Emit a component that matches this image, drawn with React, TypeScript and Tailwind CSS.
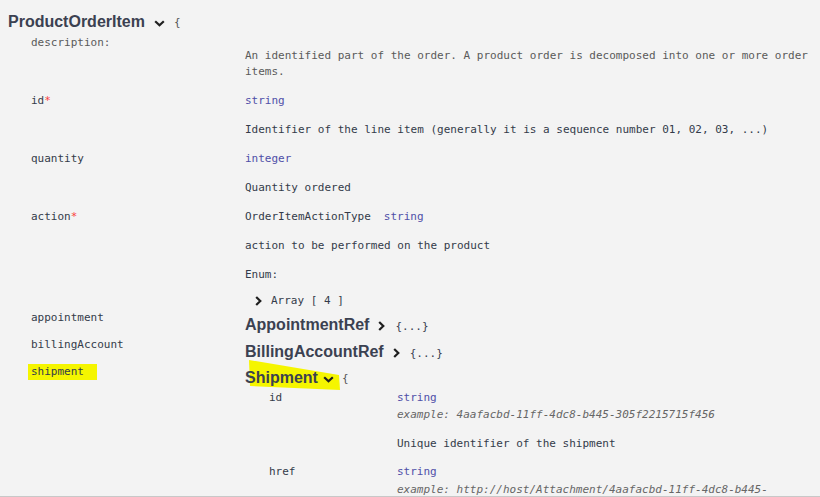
import React from "react";

const mono = "font-['Consolas','DejaVu_Sans_Mono',monospace] text-[11px] leading-[16px]";
const title = "font-['Liberation_Sans',Arial,sans-serif] text-[16px] font-bold leading-[20px] text-[#3b4151]";

function ChevronDown({ className = "" }: { className?: string }) {
  return (
    <svg width="11" height="7" viewBox="0 0 11 7" className={className} aria-hidden>
      <polyline points="1.2,1.2 5.5,5.3 9.8,1.2" fill="none" stroke="#1f1f1f" strokeWidth="2.2" />
    </svg>
  );
}

function ChevronRight({ className = "" }: { className?: string }) {
  return (
    <svg width="7" height="10" viewBox="0 0 7 10" className={className} aria-hidden>
      <polyline points="1.2,1 5.3,5 1.2,9" fill="none" stroke="#1f1f1f" strokeWidth="2.2" />
    </svg>
  );
}

function Req() {
  return <span className="text-[#f93e3e]">*</span>;
}

function Row({
  name,
  children,
  className = "",
  rightClass = "",
  nameClass = "",
}: {
  name: React.ReactNode;
  children: React.ReactNode;
  className?: string;
  rightClass?: string;
  nameClass?: string;
}) {
  return (
    <div className={`flex ${className}`}>
      <div className={`w-[245px] shrink-0 pl-[31px] ${mono} text-[#333b4a] ${nameClass}`}>{name}</div>
      <div className={`flex-1 ${rightClass}`}>{children}</div>
    </div>
  );
}

function RefTitle({ label }: { label: string }) {
  return (
    <div className="flex items-center">
      <span className={title}>{label}</span>
      <ChevronRight className="ml-[9px] mt-[2px]" />
      <span className={`${mono} ml-[10px] mt-[3px] text-[#3b4151]`}>{"{...}"}</span>
    </div>
  );
}

export default function App() {
  return (
    <div className="h-[497px] w-[820px] overflow-hidden border-b border-[#c8c8c8] bg-[#f3f3f3]">
      <div className="flex items-center pl-[8px] pt-[12px]">
        <span className={title}>ProductOrderItem</span>
        <ChevronDown className="ml-[9px] mt-[2px]" />
        <span className={`${mono} ml-[9px] mt-[2px] text-[#555]`}>{"{"}</span>
      </div>

      <Row name="description:" className="mt-[3px]" rightClass="pt-[13px]" nameClass="!text-[#5a5a5a]">
        <p className={`${mono} text-[#5a5a5a]`}>
          An identified part of the order. A product order is decomposed into one or more order
          <br />
          items.
        </p>
      </Row>

      <Row name={<>id<Req /></>} className="mt-[13px]">
        <div className={`${mono} flex flex-col gap-[13px]`}>
          <span className="text-[#4f4fa8]">string</span>
          <span className="text-[#333b4a]">Identifier of the line item (generally it is a sequence number 01, 02, 03, ...)</span>
        </div>
      </Row>

      <Row name="quantity" className="mt-[13px]">
        <div className={`${mono} flex flex-col gap-[13px]`}>
          <span className="text-[#4f4fa8]">integer</span>
          <span className="text-[#333b4a]">Quantity ordered</span>
        </div>
      </Row>

      <Row name={<>action<Req /></>} className="mt-[13px]">
        <div className={`${mono} flex flex-col`}>
          <span className="text-[#333b4a]">
            OrderItemActionType<span className="ml-[13px] text-[#4f4fa8]">string</span>
          </span>
          <span className="mt-[13px] text-[#333b4a]">action to be performed on the product</span>
          <span className="mt-[13px] text-[#333b4a]">Enum:</span>
          <span className="mt-[10px] flex items-center pl-[10px] text-[#333b4a]">
            <ChevronRight />
            <span className="ml-[9px]">Array [ 4 ]</span>
          </span>
        </div>
      </Row>

      <Row name="appointment" className="mt-[1px]" rightClass="pt-[5px]">
        <RefTitle label="AppointmentRef" />
      </Row>

      <Row name="billingAccount" className="mt-[2px]" rightClass="pt-[5px]">
        <RefTitle label="BillingAccountRef" />
      </Row>

      <Row
        name={<span className="-ml-[3px] inline-block w-[69px] bg-[#f5f500] pl-[3px]">shipment</span>}
        className="mt-[2px]"
        rightClass="pt-[4px]"
      >
        <div className="relative flex items-center">
          <svg className="absolute left-[4px] top-[-8px]" width="92" height="31" viewBox="0 0 92 31" aria-hidden>
            <polygon points="0,0 90,15 91,30 1,26" fill="#f5f500" />
          </svg>
          <span className={`${title} relative`}>Shipment</span>
          <ChevronDown className="relative ml-[5px] mt-[2px]" />
          <span className={`${mono} ml-[8px] mt-[2px] text-[#555]`}>{"{"}</span>
        </div>

        <div className="mt-[2px] flex">
          <div className={`w-[152px] shrink-0 pl-[24px] ${mono} text-[#333b4a]`}>id</div>
          <div className={`${mono} flex flex-col`}>
            <span className="text-[#4f4fa8]">string</span>
            <span className="mt-[1px] italic text-[#666]">example: 4aafacbd-11ff-4dc8-b445-305f2215715f456</span>
            <span className="mt-[13px] text-[#333b4a]">Unique identifier of the shipment</span>
          </div>
        </div>

        <div className="mt-[12px] flex">
          <div className={`w-[152px] shrink-0 pl-[24px] ${mono} text-[#333b4a]`}>href</div>
          <div className={`${mono} flex flex-col`}>
            <span className="text-[#4f4fa8]">string</span>
            <span className="mt-[2px] italic text-[#666]">example: http://host/Attachment/4aafacbd-11ff-4dc8-b445-</span>
          </div>
        </div>
      </Row>
    </div>
  );
}
